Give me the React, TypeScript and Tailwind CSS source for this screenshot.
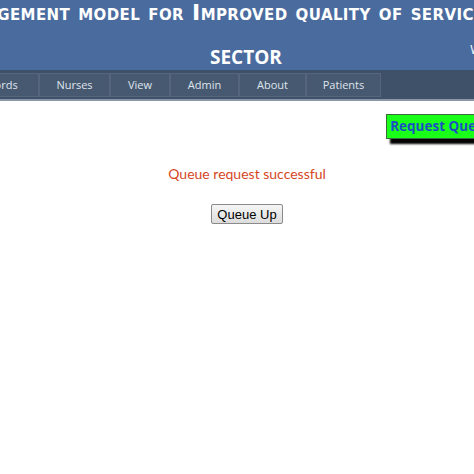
const navItems = [
  { name: 'Records', w: 'w-[84px]' },
  { name: 'Nurses', w: 'w-[71px]' },
  { name: 'View', w: 'w-[60px]' },
  { name: 'Admin', w: 'w-[69px]' },
  { name: 'About', w: 'w-[67px]' },
  { name: 'Patients', w: 'w-[75px]' },
]

const App = () => {
  return (
    <div className="w-[474px] h-[474px] overflow-hidden bg-white font-['Open_Sans',sans-serif]">
      {/* header */}
      <div className="h-[70px] bg-[#4a6b9e] text-white overflow-hidden">
        <div className="whitespace-nowrap -ml-[62px] pt-[1px] text-[22px] leading-[24px] tracking-[0.4px] font-bold [font-variant:small-caps] font-['DejaVu_Sans',sans-serif]">
          Management model for Improved quality of service in the health
        </div>
        <div className="flex items-center justify-between h-[45px] pl-[210px] pt-[19px]">
          <span className="text-[19px] font-bold leading-none">SECTOR</span>
          <span className="text-[12px] leading-none -mr-[48px] mb-[14px] whitespace-nowrap">Welcome</span>
        </div>
      </div>

      {/* nav */}
      <div className="h-[31px] bg-[#3f5069] border-b-2 border-[#8b97a6] overflow-hidden">
        <div className="flex -ml-[45px] pt-[3px]">
          {navItems.map((n) => (
            <div
              key={n.name}
              className={`${n.w} h-[24px] flex items-center justify-center bg-[#475970] border border-[#55667c] text-[11px] text-[#dfe5ee]`}
            >
              {n.name}
            </div>
          ))}
        </div>
      </div>

      {/* content */}
      <div className="flex justify-end pt-[13px]">
        <div className="-mr-[26px] h-[25px] pl-[3px] pr-[6px] flex items-center bg-[#1aff1a] border border-[#3b6b3b] shadow-[4px_5px_2px_#000] whitespace-nowrap">
          <span className="text-[13.5px] font-bold text-[#1a50c2]">Request Queue</span>
        </div>
      </div>

      <div className="flex flex-col items-center pl-[20px] pt-[25px]">
        <p className="text-[14px] text-[#d5461e] leading-[20px] font-['Lato',sans-serif]">Queue request successful</p>
        <button
          type="button"
          className="mt-[20px] w-[72px] h-[20px] border border-[#8a8a8a] rounded-[2px] bg-gradient-to-b from-[#f6f6f6] to-[#dcdcdc] text-[13px] text-black font-['Liberation_Sans',Arial,sans-serif] leading-none"
        >
          Queue Up
        </button>
      </div>
    </div>
  )
}

export default App
